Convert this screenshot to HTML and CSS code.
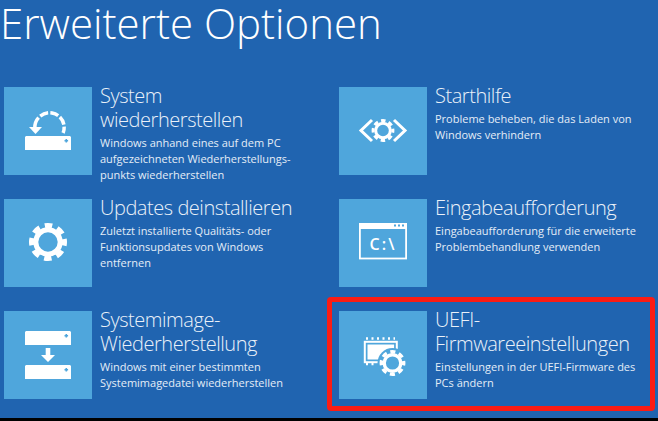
FILE: index.html
```html
<!DOCTYPE html>
<html lang="de">
<head>
  <meta charset="UTF-8">
  <title>Erweiterte Optionen</title>
  <link rel="stylesheet" href="styles.css">
</head>
<body>

<main class="page">
  <h1>Erweiterte Optionen</h1>

  <div class="options">

    <div class="option">
      <div class="tile">
        <svg viewBox="0 0 88 88" width="88" height="88">
          <path class="line dashed" d="M30.8 41 A14.7 14.7 0 1 1 59.1 46"/>
          <path class="solid" d="M25 40 H38 L31.5 47 Z"/>
          <path class="solid" d="M22 49 H66 L67 50 V63 H21 V50 Z"/>
          <path class="dot" d="M61.5 52 h1.6 v1 h1 v1.4 h-1 v1 h-1.6 v-1 h-1 v-1.4 h1 Z"/>
        </svg>
      </div>
      <div class="text">
        <h2>System<br>wiederherstellen</h2>
        <p>Windows anhand eines auf dem PC<br>aufgezeichneten Wiederherstellungs-<br>punkts wiederherstellen</p>
      </div>
    </div>

    <div class="option">
      <div class="tile">
        <svg viewBox="0 0 88 88" width="88" height="88">
          <path class="line chevron" d="M33 33 L22 43.5 L33 54"/>
          <path class="line chevron" d="M55 33 L66 43.5 L55 54"/>
          <g transform="translate(44 43.5) scale(0.6)">
            <circle class="gear-ring" r="12.2"/>
            <circle class="gear-teeth" r="16.5"/>
          </g>
        </svg>
      </div>
      <div class="text">
        <h2>Starthilfe</h2>
        <p>Probleme beheben, die das Laden von<br>Windows verhindern</p>
      </div>
    </div>

    <div class="option">
      <div class="tile">
        <svg viewBox="0 0 88 88" width="88" height="88">
          <g transform="translate(44 43)">
            <circle class="gear-ring" r="12.2"/>
            <circle class="gear-teeth" r="16.5"/>
          </g>
        </svg>
      </div>
      <div class="text">
        <h2>Updates deinstallieren</h2>
        <p>Zuletzt installierte Qualitäts- oder<br>Funktionsupdates von Windows<br>entfernen</p>
      </div>
    </div>

    <div class="option">
      <div class="tile">
        <svg viewBox="0 0 88 88" width="88" height="88">
          <rect class="window" x="20.9" y="24.9" width="46.2" height="34.6"/>
          <rect class="solid" x="20" y="24" width="48" height="6"/>
          <path class="dot" d="M55 25.5 h2 v2 h-2 Z M59 25.5 h2 v2 h-2 Z M63 25.5 h2 v2 h-2 Z"/>
          <text class="prompt" x="44" y="51" text-anchor="middle">C:\</text>
        </svg>
      </div>
      <div class="text">
        <h2>Eingabeaufforderung</h2>
        <p>Eingabeaufforderung für die erweiterte<br>Problembehandlung verwenden</p>
      </div>
    </div>

    <div class="option">
      <div class="tile">
        <svg viewBox="0 0 88 88" width="88" height="88">
          <path class="solid" d="M22 20 H66 L67 21 V34 H21 V21 Z"/>
          <path class="dot" d="M61.5 23 h1.6 v1 h1 v1.4 h-1 v1 h-1.6 v-1 h-1 v-1.4 h1 Z"/>
          <path class="solid" d="M41.7 37 H46.3 V44 H51 L44 51 L37 44 H41.7 Z"/>
          <path class="solid" d="M22 54 H66 L67 55 V68 H21 V55 Z"/>
          <path class="dot" d="M61.5 57 h1.6 v1 h1 v1.4 h-1 v1 h-1.6 v-1 h-1 v-1.4 h1 Z"/>
        </svg>
      </div>
      <div class="text">
        <h2>Systemimage-<br>Wiederherstellung</h2>
        <p>Windows mit einer bestimmten<br>Systemimagedatei wiederherstellen</p>
      </div>
    </div>

    <div class="option marked">
      <div class="tile">
        <svg viewBox="0 0 88 88" width="88" height="88">
          <path class="pins" d="M27 27.5 H56"/>
          <path class="pins" d="M27 53 H38"/>
          <rect class="chip" x="25.8" y="30.8" width="32" height="20.4"/>
          <rect class="solid" x="28.5" y="33.5" width="26.6" height="15"/>
          <circle class="halo" cx="53.5" cy="52" r="15"/>
          <g transform="translate(53.5 52) scale(0.68)">
            <circle class="gear-ring" r="12.2"/>
            <circle class="gear-teeth" r="16.5"/>
          </g>
        </svg>
      </div>
      <div class="text">
        <h2>UEFI-<br>Firmwareeinstellungen</h2>
        <p>Einstellungen in der UEFI-Firmware des<br>PCs ändern</p>
      </div>
      <div class="frame"></div>
    </div>

  </div>
</main>

</body>
</html>
```

FILE: styles.css
```css
body { margin:0; background:#000; font-family:"Open Sans", "Liberation Sans", sans-serif; color:#fff; }
.page { height:418px; background:#2064b0; padding-left:4px; overflow:hidden; }

h1 { margin:0 0 0 -4px; height:87px; font-size:42px; font-weight:300; line-height:46px; white-space:nowrap; }

.options { display:grid; grid-template-columns:311px 311px; grid-auto-rows:88px; gap:24px; }
.option { display:flex; gap:8px; position:relative; }
.tile { width:88px; height:88px; flex:none; background:#4fa6dc; }
.tile svg { display:block; }

.text { margin-top:-3px; min-width:0; white-space:nowrap; }
h2 { margin:0; font-size:20px; font-weight:300; line-height:24px; letter-spacing:-0.45px; color:#eaf1f9; }
p { margin:3px 0 0; font-size:11px; line-height:16px; color:#e4edf7; }

.frame { position:absolute; top:-14px; left:-12px; right:-5px; bottom:-12px; border:5px solid #fb1c14; border-radius:4px; }

.solid { fill:#fff; }
.dot { fill:#4fa6dc; }
.line { fill:none; stroke:#fff; stroke-width:3.5; }
.dashed { stroke-dasharray:11.3 2.2 8.5 2.2 8.5 2.2 8.5 2.2 12 2; }
.chevron { stroke-width:3; }
.gear-ring { fill:none; stroke:#fff; stroke-width:5; }
.gear-teeth { fill:none; stroke:#fff; stroke-width:5; stroke-dasharray:7.5 5.46; stroke-dashoffset:3.75; }
.window { fill:none; stroke:#fff; stroke-width:1.8; }
.prompt { fill:#fff; font-family:"Open Sans", sans-serif; font-size:16px; font-weight:600; letter-spacing:2px; }
.pins { fill:none; stroke:#fff; stroke-width:2.5; stroke-dasharray:2 3.5; }
.chip { fill:none; stroke:#fff; stroke-width:2; }
.halo { fill:#4fa6dc; }
```
